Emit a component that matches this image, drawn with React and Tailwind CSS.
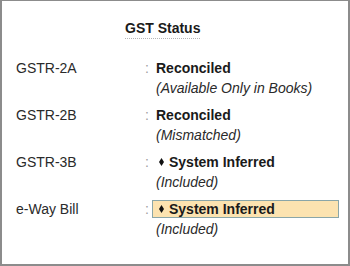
import React from "react";

const rows = [
  { label: "GSTR-2A", value: "Reconciled", note: "(Available Only in Books)" },
  { label: "GSTR-2B", value: "Reconciled", note: "(Mismatched)" },
  { label: "GSTR-3B", value: "System Inferred", note: "(Included)", diamond: true },
  { label: "e-Way Bill", value: "System Inferred", note: "(Included)", diamond: true, active: true },
];

function Diamond() {
  return (
    <svg width="5" height="8" viewBox="0 0 5 8" className="ml-[3px] mr-[5px] shrink-0">
      <path d="M2.5 0 L5 4 L2.5 8 L0 4 Z" fill="#111" />
    </svg>
  );
}

export default function App() {
  return (
    <div
      className="w-[350px] h-[266px] bg-white border-t border-l-2 border-r-2 border-b-2 border-[#8c8c8c] text-[#1a1a1a]"
      style={{ fontFamily: '"Liberation Sans", Arial, sans-serif' }}
    >
      <div className="pt-[19px] pl-[123px]">
        <div className="w-fit text-[14px] leading-[16px] font-bold pb-[2px] border-b border-dotted border-[#b5b5b5]">
          GST Status
        </div>
      </div>

      <div className="mt-[20px] pl-[14px] flex flex-col gap-[9px]">
        {rows.map((row) => (
          <div key={row.label} className="flex text-[14px]">
            <div className="w-[129px] h-[18px] leading-[18px] text-[#2a2a2a]">{row.label}</div>
            <div className="w-[7px] h-[18px] leading-[18px] text-[#a0a0a0]">:</div>
            <div className="flex flex-col">
              <div
                className={
                  row.active
                    ? "flex items-center w-[187px] h-[18px] leading-[16px] pl-[3px] border border-[#8aa6a8] bg-[#fce3b0] font-bold"
                    : "flex items-center h-[18px] leading-[16px] pl-[3px] border border-transparent font-bold"
                }
              >
                {row.diamond && <Diamond />}
                <span>{row.value}</span>
              </div>
              <div className="mt-[2px] h-[18px] leading-[18px] pl-[4px] italic text-[#2a2a2a]">{row.note}</div>
            </div>
          </div>
        ))}
      </div>
    </div>
  );
}
